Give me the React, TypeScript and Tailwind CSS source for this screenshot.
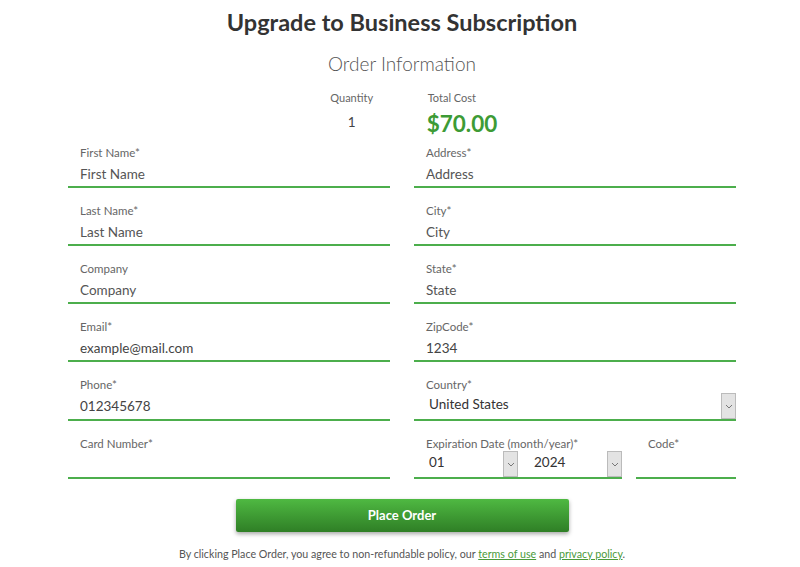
import React from "react";

const font = { fontFamily: 'Lato, "Open Sans", sans-serif' };

function Field({ label, value, placeholder = false }: { label: string; value?: string; placeholder?: boolean }) {
  return (
    <div className="flex flex-col border-b-2 border-[#4cae4c] pt-[4px]">
      <div className="h-[16px] px-3 text-[11.5px] leading-[16px] text-[#666]">{label}</div>
      <div className={`h-[25px] px-3 text-[13.5px] leading-[27px] ${placeholder ? "text-[#555]" : "text-[#444]"}`}>{value}</div>
    </div>
  );
}

function Chevron() {
  return (
    <svg width="8" height="5" viewBox="0 0 8 5" fill="none">
      <path d="M1 1 L4 4 L7 1" stroke="#777" strokeWidth="1" />
    </svg>
  );
}

function SelectBox({ value, textPad }: { value: string; textPad: string }) {
  return (
    <div className="flex h-[26px] items-center">
      <div className={`mb-[4px] flex-1 text-[13.5px] text-[#333] ${textPad}`}>{value}</div>
      <div className="flex h-[26px] w-[15px] items-center justify-center border border-[#bbb] bg-[#e3e3e3]">
        <Chevron />
      </div>
    </div>
  );
}

export default function App() {
  return (
    <div className="min-h-[567px] w-[800px] bg-white" style={font}>
      <div className="ml-[68px] w-[668px]">
        <h1 className="pt-[6px] text-center text-[23.5px] font-bold leading-[32px] text-[#333]">
          Upgrade to Business Subscription
        </h1>
        <h2 className="mt-[13px] text-center text-[19px] font-light leading-[26px] text-[#555]">Order Information</h2>
        <div className="mt-[13px] flex justify-center gap-[50px] pl-[20px]">
          <div className="flex w-[50px] flex-col items-center">
            <div className="text-[11px] leading-[16px] text-[#666]">Quantity</div>
            <div className="mt-[7px] text-[13.5px] leading-[18px] text-[#444]">1</div>
          </div>
          <div className="flex flex-col items-start">
            <div className="pl-[1px] text-[11px] leading-[16px] text-[#666]">Total Cost</div>
            <div className="mt-[3px] text-[22.5px] font-bold leading-[30px] text-[#3d9b35]">$70.00</div>
          </div>
        </div>

        <div className="mt-[2px] grid grid-cols-2 gap-x-[24px] gap-y-[11px]">
          <Field label="First Name*" value="First Name" placeholder />
          <Field label="Address*" value="Address" placeholder />
          <Field label="Last Name*" value="Last Name" placeholder />
          <Field label="City*" value="City" placeholder />
          <Field label="Company" value="Company" placeholder />
          <Field label="State*" value="State" placeholder />
          <Field label="Email*" value="example@mail.com" />
          <Field label="ZipCode*" value="1234" />
          <Field label="Phone*" value="012345678" />
          <div className="flex flex-col border-b-2 border-[#4cae4c] pt-[4px]">
            <div className="h-[16px] px-3 text-[11.5px] leading-[16px] text-[#666]">Country*</div>
            <SelectBox value="United States" textPad="pl-[15px]" />
          </div>
          <Field label="Card Number*" value="" />
          <div className="flex gap-[14px]">
            <div className="flex w-[208px] flex-col pt-[4px]">
              <div className="h-[16px] px-3 text-[11.5px] leading-[16px] text-[#666]">Expiration Date (month/year)*</div>
              <div className="mt-[-1px] flex gap-[2px] border-b-2 border-[#4cae4c]">
                <div className="w-[104px]">
                  <SelectBox value="01" textPad="pl-[15px]" />
                </div>
                <div className="w-[102px]">
                  <SelectBox value="2024" textPad="pl-[14px]" />
                </div>
              </div>
            </div>
            <div className="flex flex-1 flex-col justify-between border-b-2 border-[#4cae4c] pt-[4px]">
              <div className="h-[16px] px-3 text-[11.5px] leading-[16px] text-[#666]">Code*</div>
            </div>
          </div>
        </div>

        <div className="mt-[20px] flex justify-center">
          <button className="h-[33px] w-[333px] rounded-[2px] bg-gradient-to-b from-[#4fb942] to-[#2f7f26] text-[13px] font-bold text-white shadow-[0_2px_4px_rgba(0,0,0,0.35)]">
            Place Order
          </button>
        </div>
        <p className="mt-[14px] text-center text-[10.7px] leading-[16px] text-[#555]">
          By clicking Place Order, you agree to non-refundable policy, our{" "}
          <span className="text-[#4a9a3a] underline">terms of use</span> and{" "}
          <span className="text-[#4a9a3a] underline">privacy policy</span>.
        </p>
      </div>
    </div>
  );
}
